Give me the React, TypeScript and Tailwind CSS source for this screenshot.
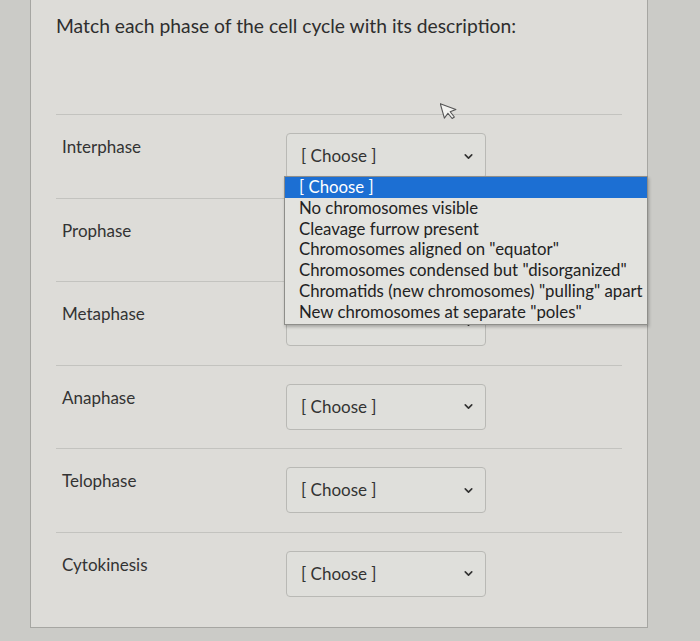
import { ChevronDown } from "lucide-react";

const rows = ["Interphase", "Prophase", "Metaphase", "Anaphase", "Telophase", "Cytokinesis"];

const options = [
  "[ Choose ]",
  "No chromosomes visible",
  "Cleavage furrow present",
  'Chromosomes aligned on "equator"',
  'Chromosomes condensed but "disorganized"',
  'Chromatids (new chromosomes) "pulling" apart',
  'New chromosomes at separate "poles"',
];

// the dropdown list covers the Prophase and Metaphase selects
const covered = ["Prophase", "Metaphase"];

function Select({ hidden }: { hidden?: boolean }) {
  return (
    <div className="flex h-[46px] w-[200px] items-center justify-between rounded-[4px] border border-[#b9b9b5] bg-[#dfdfdb] pl-[14px] pr-[10px] text-[17px] text-[#333]">
      <span className={hidden ? "invisible" : ""}>[ Choose ]</span>
      <ChevronDown size={13} strokeWidth={3} className="text-[#333]" />
    </div>
  );
}

export default function App() {
  return (
    <div
      className="relative h-[641px] w-[700px] overflow-hidden bg-[#cbcbc7]"
      style={{ fontFamily: "Lato, 'Liberation Sans', sans-serif" }}
    >
      <div className="ml-[30px] h-[628px] w-[618px] border-x border-b border-[#a6a6a2] bg-[#dddcd8]">
        <h1 className="pl-[25px] pt-[13px] text-[19.3px] leading-[26px] text-[#2e2e2e]">
          Match each phase of the cell cycle with its description:
        </h1>

        <div className="mx-[25px] mt-[75px]">
          {rows.map((label) => (
            <div key={label} className="flex h-[83.5px] border-t border-[#c3c3bf]">
              <div className="w-[230px] pl-[6px] pt-[21px] text-[17px] leading-[22px] text-[#333]">{label}</div>
              <div className="pt-[18px]">
                <Select hidden={covered.includes(label)} />
              </div>
            </div>
          ))}
        </div>
      </div>

      {/* open dropdown list */}
      <div className="absolute left-[284px] top-[176px] w-[364px] border border-[#8e8e8a] bg-[#e3e3df] pb-[1px] shadow-[1px_2px_3px_rgba(0,0,0,0.25)]">
        {options.map((o, i) => (
          <div
            key={o}
            className={
              i === 0
                ? "h-[20.8px] bg-[#1c6fd3] pl-[14px] text-[16.8px] leading-[20.8px] text-white"
                : "h-[20.8px] whitespace-nowrap pl-[14px] text-[16.8px] leading-[20.8px] text-[#222]"
            }
          >
            {o}
          </div>
        ))}
      </div>

      {/* mouse pointer */}
      <svg className="absolute left-[440px] top-[101px]" width="18" height="20" viewBox="0 0 18 20">
        <path
          d="M2 1 L16 10 L10 11 L13 17 L10.5 18 L7.5 12 L3 16 Z"
          fill="#f3f3f0"
          stroke="#555"
          strokeWidth="1.1"
          strokeLinejoin="round"
          transform="rotate(-12 9 10)"
        />
      </svg>
    </div>
  );
}
